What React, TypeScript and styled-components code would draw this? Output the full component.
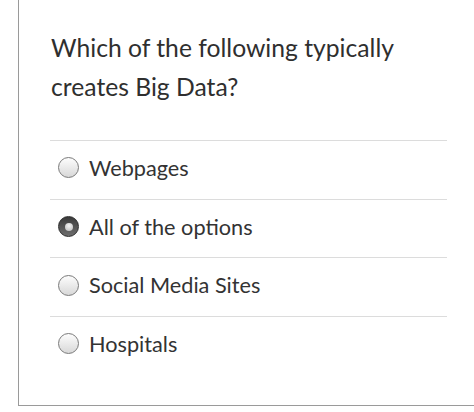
import React from 'react';
import styled, { createGlobalStyle } from 'styled-components';

const GlobalStyle = createGlobalStyle`
  html, body {
    margin: 0;
    padding: 0;
    background: #fff;
  }
  body {
    font-family: Lato, "Open Sans", sans-serif;
    color: #333;
  }
`;

const StyledCard = styled.div`
  margin-left: 18px;
  height: 406px;
  box-sizing: border-box;
  border-left: 1px solid #9a9a9a;
  border-bottom: 1px solid #9a9a9a;
  padding: 28px 27px 0 31px;
`;

const StyledQuestion = styled.p`
  margin: 0 0 34px 1px;
  font-size: 24.7px;
  line-height: 39px;
  color: #2f2f2f;
`;

const StyledList = styled.div`
  display: flex;
  flex-direction: column;
`;

const StyledOption = styled.label`
  display: flex;
  align-items: center;
  gap: 10px;
  height: 58.7px;
  box-sizing: border-box;
  border-top: 1px solid #dcdcdc;
  padding-left: 8px;
  padding-bottom: 4px;
  font-size: 21.7px;
  line-height: 24px;
  color: #333;
`;

const StyledRadio = styled.span<{ $checked?: boolean }>`
  width: 21px;
  height: 21px;
  box-sizing: border-box;
  border-radius: 50%;
  border: 1px solid ${p => (p.$checked ? '#2a2a2a' : '#7a7a7a')};
  background: ${p =>
    p.$checked
      ? 'linear-gradient(#3a3a3a, #6e6e6e)'
      : 'linear-gradient(#fdfdfd, #d8d8d8)'};
  display: flex;
  align-items: center;
  justify-content: center;
  flex-shrink: 0;
  &::after {
    content: '';
    display: ${p => (p.$checked ? 'block' : 'none')};
    width: 8px;
    height: 8px;
    border-radius: 50%;
    background: radial-gradient(circle at 50% 35%, #f4f4f4, #b8b8b8);
  }
`;

const options = [
  { label: 'Webpages', checked: false },
  { label: 'All of the options', checked: true },
  { label: 'Social Media Sites', checked: false },
  { label: 'Hospitals', checked: false },
];

const App = () => {
  return (
    <>
      <GlobalStyle />
      <StyledCard>
        <StyledQuestion>
          Which of the following typically
          <br />
          creates Big Data?
        </StyledQuestion>
        <StyledList>
          {options.map(o => (
            <StyledOption key={o.label}>
              <StyledRadio $checked={o.checked} />
              {o.label}
            </StyledOption>
          ))}
        </StyledList>
      </StyledCard>
    </>
  );
};

export default App;
